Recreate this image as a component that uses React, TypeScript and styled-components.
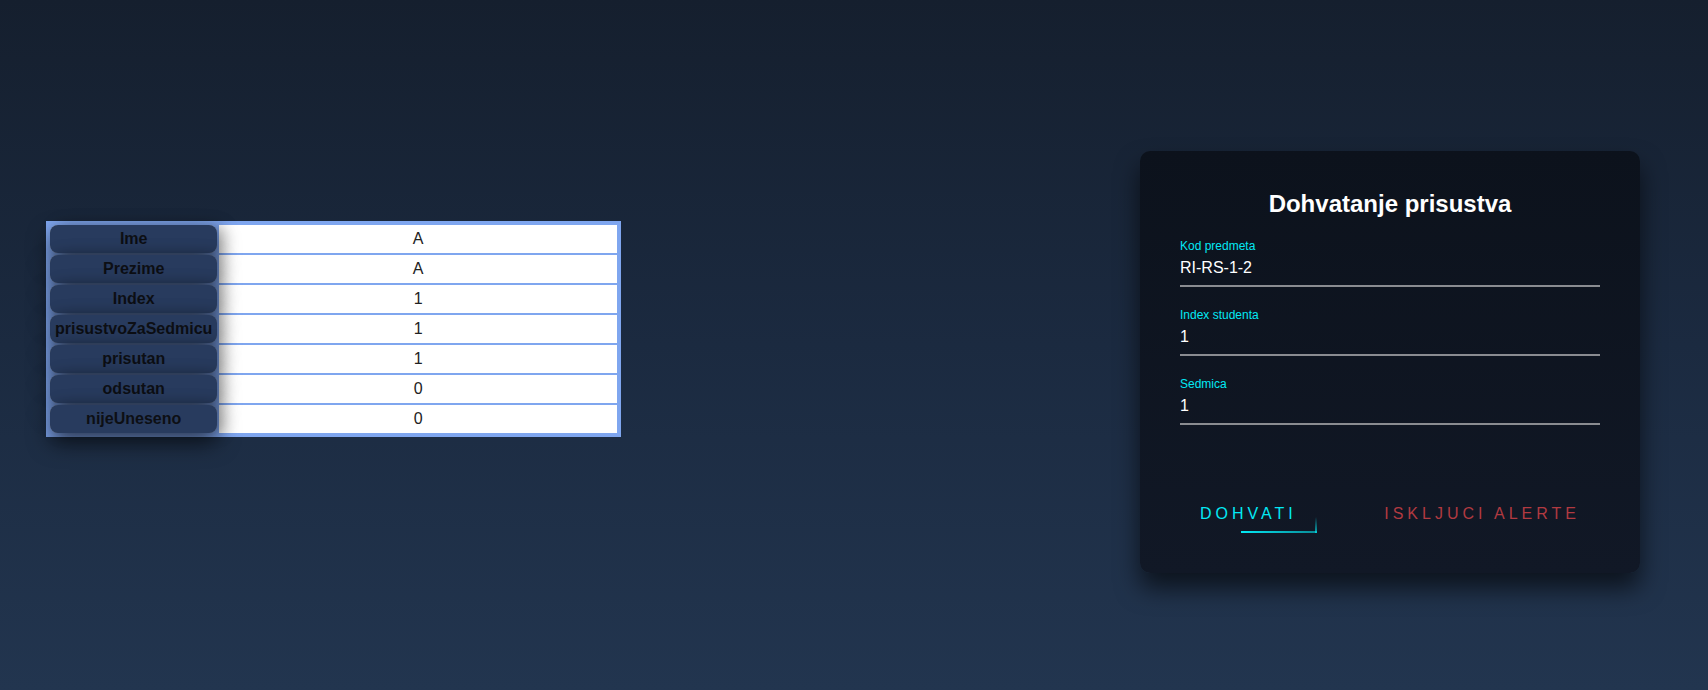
import styled, { createGlobalStyle } from 'styled-components';

const GlobalStyle = createGlobalStyle`
    html, body {
        margin: 0;
        padding: 0;
    }
    body {
        font-family: 'Liberation Sans', Arial, sans-serif;
        background: #151f2e;
    }
`;

const Page = styled.div`
    display: flex;
    justify-content: space-between;
    align-items: flex-start;
    box-sizing: border-box;
    height: 690px;
    padding: 0 68px 0 46px;
    background: linear-gradient(180deg, #151f2e 0%, #1b2a40 50%, #22354f 100%);
`;

const InfoTable = styled.table`
    margin-top: 221px;
    width: 575px;
    border: 2px solid #7fa6ef;
    border-collapse: separate;
    border-spacing: 2px;
    background: #7fa6ef;
`;

const Row = styled.tr`
    background: #bfc3c9;
`;

const HeadCell = styled.th`
    position: relative;
    width: 1%;
    height: 28px;
    padding: 0 5px;
    white-space: nowrap;
    font-size: 16px;
    font-weight: 700;
    color: #0d0f14;
    background: #283b5e;
    border-radius: 8px;
    box-shadow: 0 10px 22px rgba(0, 0, 0, 0.6), 6px 0 16px rgba(0, 0, 0, 0.28);
`;

const ValueCell = styled.td`
    height: 28px;
    padding: 0;
    text-align: center;
    font-size: 16px;
    color: #222;
    background: #fff;
`;

const Card = styled.form`
    margin-top: 151px;
    width: 500px;
    box-sizing: border-box;
    padding: 39px 40px 40px;
    border-radius: 10px;
    background: linear-gradient(180deg, #0c121c 0%, #111826 100%);
    box-shadow: 0 15px 25px rgba(0, 0, 0, 0.6);
`;

const Title = styled.h2`
    margin: 0 0 21px;
    font-size: 24px;
    line-height: 28px;
    font-weight: 700;
    text-align: center;
    color: #fff;
`;

const Field = styled.div`
    margin-bottom: 21px;
`;

const Label = styled.label`
    display: block;
    font-size: 12px;
    line-height: 14px;
    color: #03e9f4;
`;

const Input = styled.input`
    display: block;
    width: 100%;
    box-sizing: border-box;
    padding: 6px 0 8px;
    border: none;
    border-bottom: 2px solid #8a8c91;
    outline: none;
    background: transparent;
    font-family: inherit;
    font-size: 16px;
    line-height: 18px;
    color: #fff;
`;

const ButtonRow = styled.div`
    display: flex;
    justify-content: space-between;
    margin-top: 70px;
`;

const LinkButton = styled.button<{ $tone: 'cyan' | 'red' }>`
    position: relative;
    overflow: hidden;
    padding: 10px 20px;
    border: none;
    background: transparent;
    font-family: inherit;
    font-size: 16px;
    line-height: 18px;
    letter-spacing: 4px;
    text-transform: uppercase;
    color: ${(p) => (p.$tone === 'cyan' ? '#03e9f4' : '#b13a41')};
    cursor: pointer;
`;

const BottomTrail = styled.span`
    position: absolute;
    bottom: 0;
    left: 61px;
    right: 0;
    height: 2px;
    background: linear-gradient(90deg, #03e9f4 0%, rgba(3, 233, 244, 0.55) 100%);
`;

const RightTrail = styled.span`
    position: absolute;
    right: 0;
    bottom: 0;
    width: 2px;
    height: 16px;
    background: linear-gradient(180deg, transparent 0%, rgba(3, 233, 244, 0.7) 100%);
`;

const rows: [string, string][] = [
    ['Ime', 'A'],
    ['Prezime', 'A'],
    ['Index', '1'],
    ['prisustvoZaSedmicu', '1'],
    ['prisutan', '1'],
    ['odsutan', '0'],
    ['nijeUneseno', '0'],
];

const fields = [
    { id: 'kod', label: 'Kod predmeta', value: 'RI-RS-1-2' },
    { id: 'index', label: 'Index studenta', value: '1' },
    { id: 'sedmica', label: 'Sedmica', value: '1' },
];

export default function App() {
    return (
        <>
            <GlobalStyle />
            <Page>
                <InfoTable>
                    <tbody>
                        {rows.map(([key, value]) => (
                            <Row key={key}>
                                <HeadCell>{key}</HeadCell>
                                <ValueCell>{value}</ValueCell>
                            </Row>
                        ))}
                    </tbody>
                </InfoTable>
                <Card onSubmit={(e) => e.preventDefault()}>
                    <Title>Dohvatanje prisustva</Title>
                    {fields.map((f) => (
                        <Field key={f.id}>
                            <Label htmlFor={f.id}>{f.label}</Label>
                            <Input id={f.id} defaultValue={f.value} />
                        </Field>
                    ))}
                    <ButtonRow>
                        <LinkButton type="submit" $tone="cyan">
                            Dohvati
                            <BottomTrail />
                            <RightTrail />
                        </LinkButton>
                        <LinkButton type="button" $tone="red">
                            Iskljuci alerte
                        </LinkButton>
                    </ButtonRow>
                </Card>
            </Page>
        </>
    );
}
